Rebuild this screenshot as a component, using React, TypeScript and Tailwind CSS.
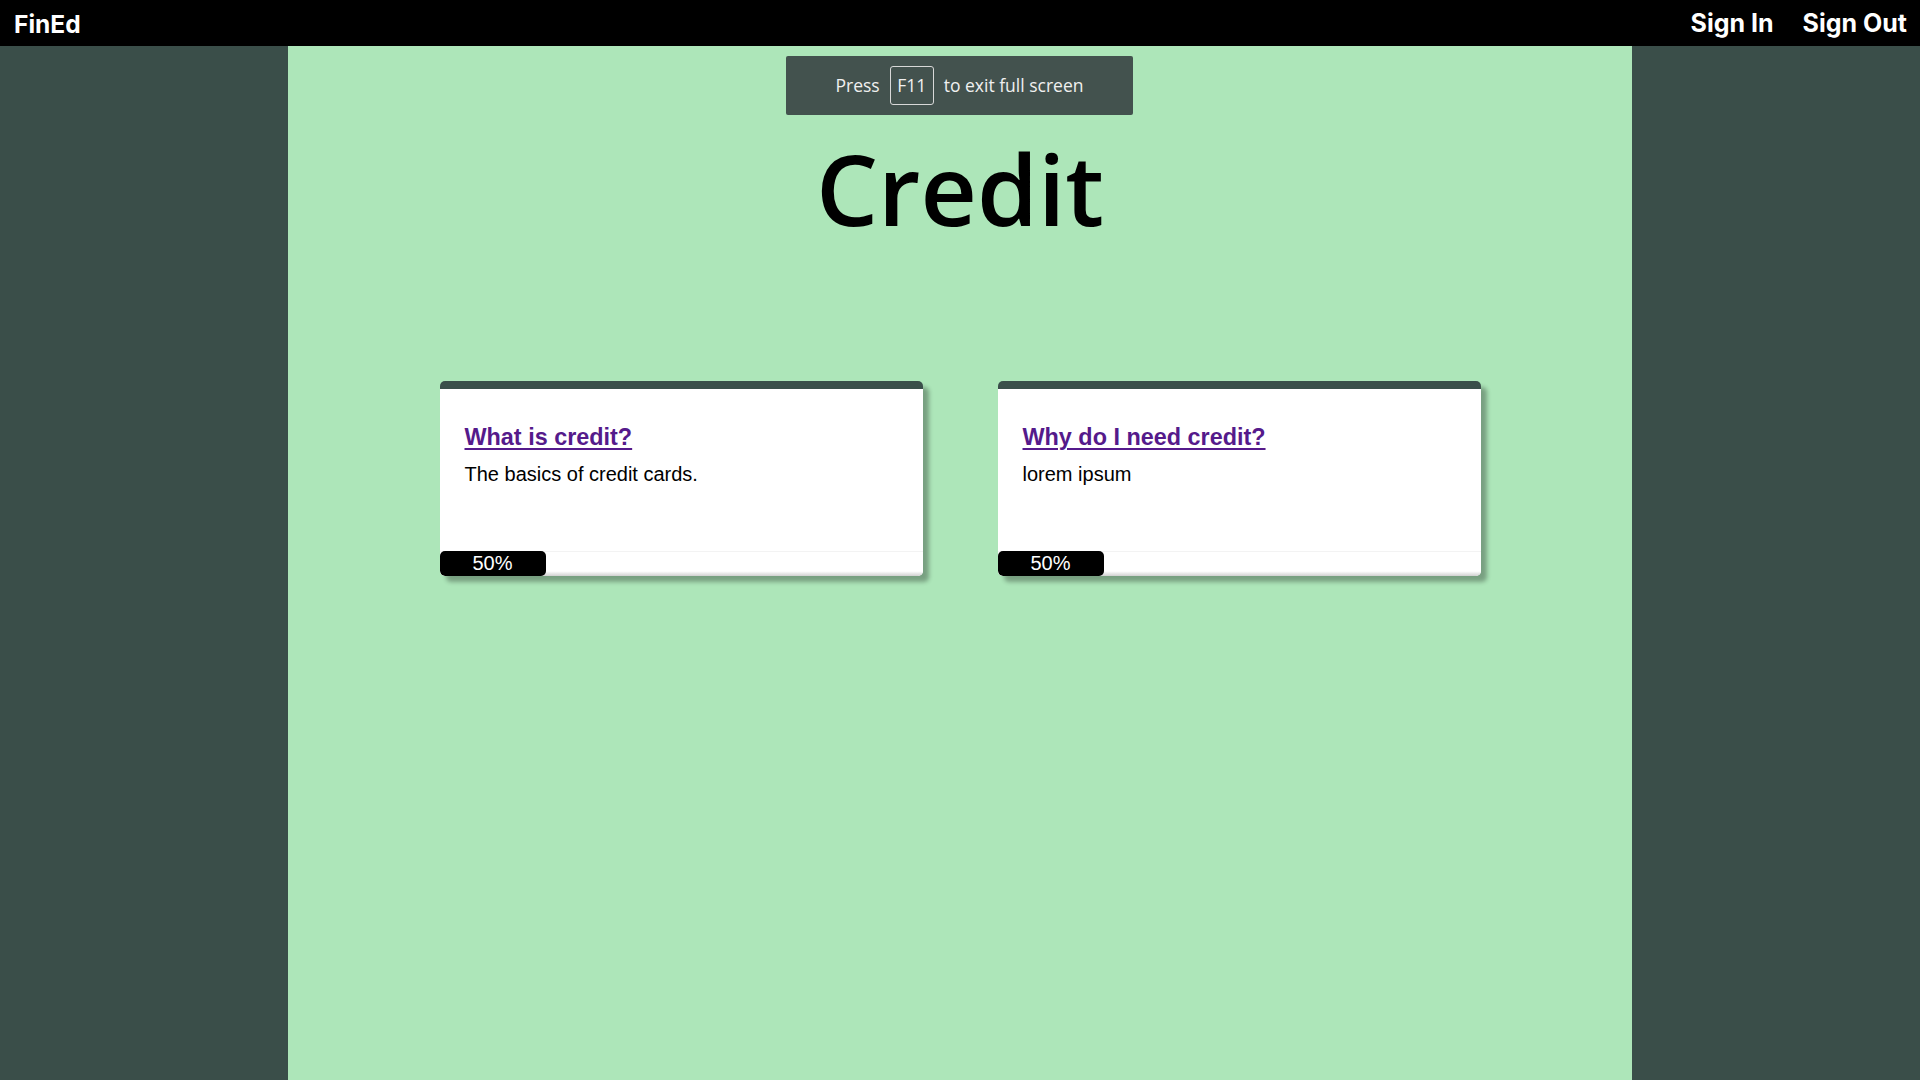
import React from "react";

type Lesson = { title: string; blurb: string; progress: number };

const lessons: Lesson[] = [
  { title: "What is credit?", blurb: "The basics of credit cards.", progress: 50 },
  { title: "Why do I need credit?", blurb: "lorem ipsum", progress: 50 },
];

function LessonCard({ lesson }: { lesson: Lesson }) {
  return (
    <div className="flex h-[195px] w-[483px] flex-col overflow-hidden rounded-[5px] border-t-[8px] border-[#3a4f4a] bg-white shadow-[6px_6px_4px_rgba(0,0,0,0.3)]">
      <div className="flex-1 px-[25px] pt-[35px]" style={{ fontFamily: '"Liberation Sans", Arial, sans-serif' }}>
        <a
          href="#"
          className="block text-[23.4px] font-bold leading-[27px] text-[#551a8b] underline decoration-2 underline-offset-[3px]"
        >
          <span>{lesson.title}</span>
        </a>
        <p className="mt-[12px] text-[20px] leading-[23px] text-black">{lesson.blurb}</p>
      </div>
      <div className="h-[25px] border-t border-[#f3f3f3] bg-gradient-to-b from-white from-80% to-[#d0d0d0]">
        <div
          className="flex h-[25px] w-[106px] items-center justify-center rounded-[5px] bg-black text-[20px] leading-[25px] text-white"
          style={{ fontFamily: '"Liberation Sans", Arial, sans-serif', marginTop: -1 }}
        >
          {lesson.progress}%
        </div>
      </div>
    </div>
  );
}

export default function App() {
  return (
    <div className="relative flex min-h-screen flex-col bg-[#3a4e49]">
      <header
        className="flex h-[46px] items-center justify-between bg-black pl-[14px] pr-[13px] pt-[2px] text-white"
        style={{ fontFamily: 'Inter, "Open Sans", sans-serif' }}
      >
        <span className="text-[24.5px] font-bold">FinEd</span>
        <nav className="flex items-center gap-[29px] text-[25px] font-bold">
          <a href="#">Sign In</a>
          <a href="#">Sign Out</a>
        </nav>
      </header>

      <div className="flex flex-1">
        <aside className="w-[288px] bg-[#3a4e49]" />
        <main className="flex w-[1344px] flex-col items-center bg-[#ade6b9]">
          <h1
            className="mt-[75px] text-[98px] leading-[134px] font-semibold text-black"
            style={{ fontFamily: '"Open Sans", "Noto Sans", sans-serif' }}
          >
            Credit
          </h1>
          <div className="mt-[126px] flex gap-[75px]">
            {lessons.map((l) => (
              <LessonCard key={l.title} lesson={l} />
            ))}
          </div>
        </main>
        <aside className="w-[288px] bg-[#3a4e49]" />
      </div>

      {/* full-screen hint overlay */}
      <div
        className="absolute left-[786px] top-[56px] flex h-[59px] w-[347px] items-center justify-center gap-[10px] rounded-[2px] bg-[#43524e] text-[17.5px] text-[#f0f0f0]"
        style={{ fontFamily: '"Open Sans", "Noto Sans", sans-serif' }}
      >
        <span>Press</span>
        <span className="flex h-[39px] w-[44px] items-center justify-center rounded-[3px] border border-[#d8d8d8]">F11</span>
        <span>to exit full screen</span>
      </div>
    </div>
  );
}
